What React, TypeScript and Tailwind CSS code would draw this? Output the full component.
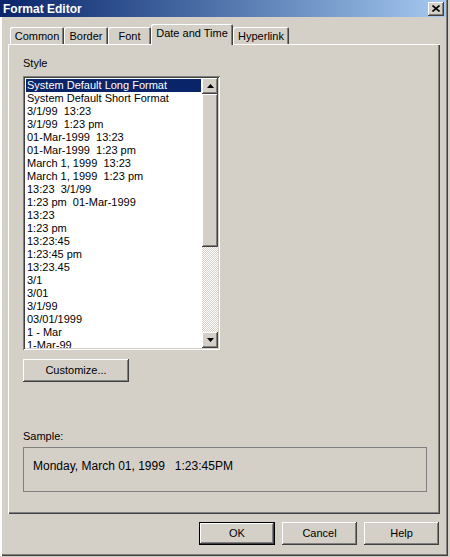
import React from "react";

const items = [
  "System Default Long Format",
  "System Default Short Format",
  "3/1/99  13:23",
  "3/1/99  1:23 pm",
  "01-Mar-1999  13:23",
  "01-Mar-1999  1:23 pm",
  "March 1, 1999  13:23",
  "March 1, 1999  1:23 pm",
  "13:23  3/1/99",
  "1:23 pm  01-Mar-1999",
  "13:23",
  "1:23 pm",
  "13:23:45",
  "1:23:45 pm",
  "13:23.45",
  "3/1",
  "3/01",
  "3/1/99",
  "03/01/1999",
  "1 - Mar",
  "1-Mar-99",
];

const raised =
  "shadow-[inset_-1px_-1px_#404040,inset_1px_1px_#ffffff,inset_-2px_-2px_#808080,inset_2px_2px_#d4d0c8]";

function Tab({ label, w, active }: { label: string; w: string; active?: boolean }) {
  if (active) {
    return (
      <div
        className={`relative z-10 ${w} h-[21px] -mb-[1px] bg-[#d4d0c8] rounded-t-[2px] shadow-[inset_1px_1px_#ffffff,inset_-1px_0_#404040,inset_-2px_0_#808080] flex items-start justify-center pt-[3px] leading-[13px]`}
      >
        {label}
      </div>
    );
  }
  return (
    <div
      className={`${w} h-[17px] bg-[#d4d0c8] rounded-t-[2px] shadow-[inset_1px_1px_#ffffff,inset_-1px_0_#404040,inset_-2px_0_#808080] flex items-start justify-center pt-[3px] leading-[13px]`}
    >
      {label}
    </div>
  );
}

function Button({ label, w, def }: { label: string; w: string; def?: boolean }) {
  if (def) {
    return (
      <div className={`${w} h-[23px] border border-black bg-[#d4d0c8]`}>
        <div className={`w-full h-full ${raised} flex items-center justify-center`}>{label}</div>
      </div>
    );
  }
  return (
    <div className={`${w} h-[23px] bg-[#d4d0c8] ${raised} flex items-center justify-center`}>
      {label}
    </div>
  );
}

export default function App() {
  return (
    <div className="w-[450px] h-[557px] bg-[#d4d0c8] font-['Liberation_Sans',Arial,sans-serif] text-[11px] text-black overflow-hidden">
      <div className="w-[448px] h-[556px] flex flex-col shadow-[inset_2px_0_#ffffff,inset_-1px_-1px_#404040,inset_-2px_-2px_#808080]">
        {/* Title bar */}
        <div className="h-[17px] w-[446px] bg-gradient-to-r from-[#0a246a] to-[#a6caf0] flex items-center justify-between pl-[3px] pr-[2px]">
          <span className="text-white font-bold text-[12px] leading-[14px]">Format Editor</span>
          <div className={`w-[16px] h-[14px] bg-[#d4d0c8] ${raised} flex items-center justify-center`}>
            <svg width="8" height="7" viewBox="0 0 8 7">
              <path d="M0.5 0.5 L7.5 6.5 M7.5 0.5 L0.5 6.5" stroke="#000" strokeWidth="1.6" />
            </svg>
          </div>
        </div>

        {/* Tabs */}
        <div className="mt-[7px] pl-[10px] h-[20px] flex items-end">
          <Tab label="Common" w="w-[54px]" />
          <Tab label="Border" w="w-[44px]" />
          <Tab label="Font" w="w-[43px]" />
          <Tab label="Date and Time" w="w-[82px]" active />
          <Tab label="Hyperlink" w="w-[56px]" />
        </div>

        {/* Panel */}
        <div className="ml-[8px] w-[432px] h-[470px] shadow-[inset_1px_1px_#ffffff,inset_-1px_-1px_#404040,inset_-2px_-2px_#808080] px-[15px] pt-[13px] flex flex-col">
          <div className="leading-[13px] h-[13px]">Style</div>

          {/* List box */}
          <div className="mt-[6px] w-[197px] h-[274px] bg-white p-[2px] shadow-[inset_1px_1px_#808080,inset_-1px_-1px_#ffffff,inset_2px_2px_#404040,inset_-2px_-2px_#d4d0c8] flex">
            <div className="flex-1 overflow-hidden pl-[1px] pt-[1px]">
              {items.map((it, i) => (
                <div
                  key={i}
                  className={`h-[13px] leading-[13px] whitespace-pre pl-[1px] ${
                    i === 0 ? "bg-[#0a246a] text-white mr-[1px]" : ""
                  }`}
                >
                  {it}
                </div>
              ))}
            </div>
            {/* Scrollbar */}
            <div className="w-[16px] flex flex-col">
              <div className={`h-[16px] bg-[#d4d0c8] ${raised} flex items-center justify-center`}>
                <svg width="7" height="4" viewBox="0 0 7 4">
                  <path d="M3.5 0 L7 4 L0 4 Z" fill="#000" />
                </svg>
              </div>
              <div className={`h-[153px] bg-[#d4d0c8] ${raised}`} />
              <div className="flex-1 bg-[repeating-conic-gradient(#ffffff_0%_25%,#d4d0c8_0%_50%)] bg-[length:2px_2px]" />
              <div className={`h-[16px] bg-[#d4d0c8] ${raised} flex items-center justify-center`}>
                <svg width="7" height="4" viewBox="0 0 7 4">
                  <path d="M0 0 L7 0 L3.5 4 Z" fill="#000" />
                </svg>
              </div>
            </div>
          </div>

          <div className="mt-[9px]">
            <Button label="Customize..." w="w-[106px]" />
          </div>

          <div className="mt-[48px] leading-[13px] h-[13px]">Sample:</div>
          <div className="mt-[4px] w-[404px] h-[45px] border border-[#808080] pl-[9px] pt-[10px]">
            <span className="text-[12px] leading-[14px] whitespace-pre">Monday, March 01, 1999   1:23:45PM</span>
          </div>
        </div>

        {/* Bottom buttons */}
        <div className="mt-[8px] flex justify-end gap-[7px] pr-[9px]">
          <Button label="OK" w="w-[76px]" def />
          <Button label="Cancel" w="w-[75px]" />
          <Button label="Help" w="w-[75px]" />
        </div>
      </div>
    </div>
  );
}
